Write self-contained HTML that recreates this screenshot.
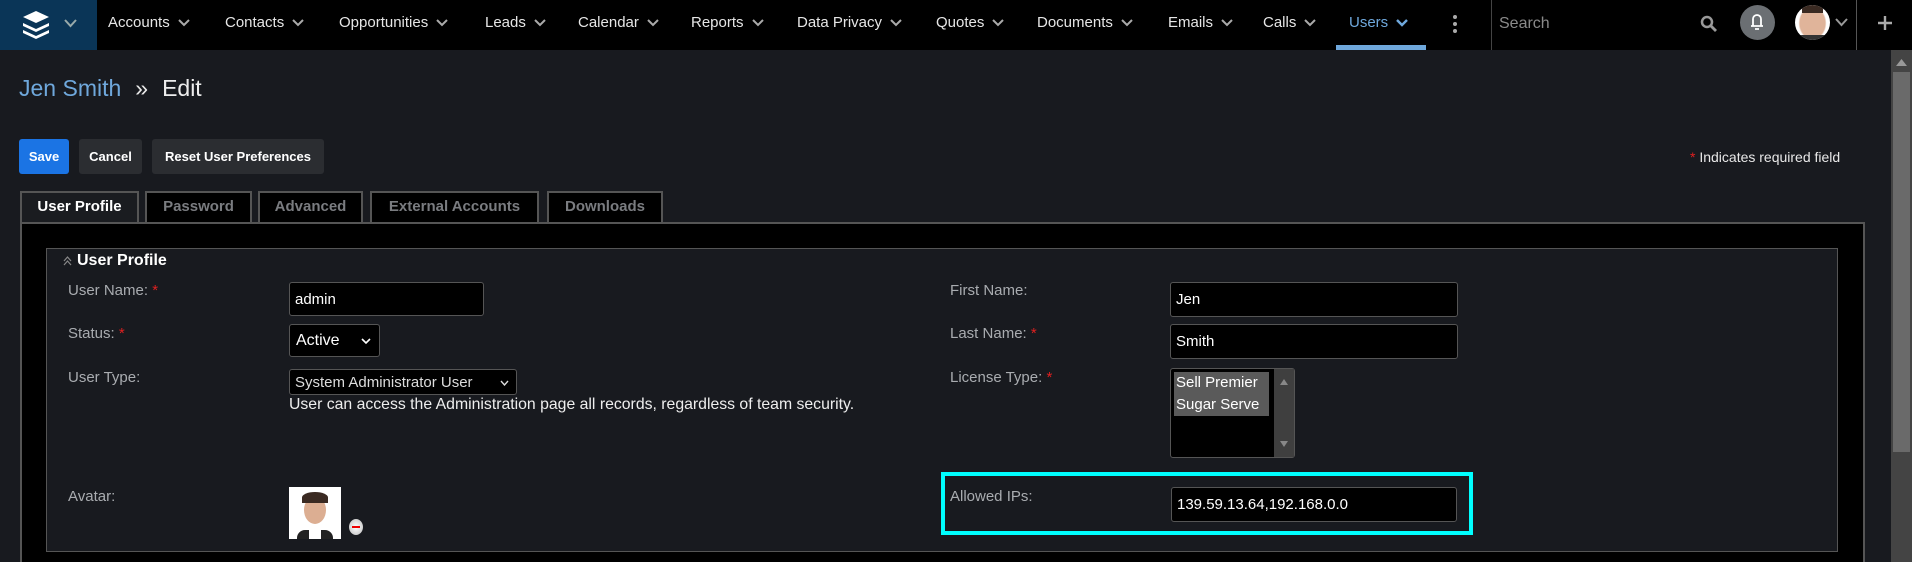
<!DOCTYPE html>
<html><head><meta charset="utf-8"><style>
*{margin:0;padding:0;box-sizing:border-box}
html{width:1912px;height:562px;overflow:hidden}
body{width:1912px;height:562px;overflow:hidden;background:#181a1f;font-family:"Liberation Sans",Arial,sans-serif;color:#e8e8e8;position:relative}
.a{position:absolute;white-space:nowrap}
.nav{position:absolute;left:0;top:0;width:1912px;height:50px;background:#000}
.ni{position:absolute;top:14px;font-size:15px;color:#e6e6e6}
.ni svg{margin-left:8px;vertical-align:middle}
.lbl{position:absolute;font-size:15px;color:#a9acb0}
.req{color:#e02020}
.inp{position:absolute;background:#000;border:1px solid #555;border-radius:3px;font-size:15px;color:#fff;padding-left:5px;display:flex;align-items:center}
.btn{position:absolute;top:139px;height:35px;border-radius:3px;font-size:13px;font-weight:bold;color:#fff;display:flex;align-items:center;justify-content:center;background:#2b2d31}
.tab{position:absolute;top:191px;height:32px;border:2px solid #555;border-bottom:none;background:#000;color:#7a7c80;font-size:15px;font-weight:bold;display:flex;align-items:center;justify-content:center;padding-bottom:3px}
</style></head><body>
<div class="nav">
 <div class="a" style="left:0;top:0;width:97px;height:50px;background:#0a3557"></div>
 <svg class="a" style="left:21px;top:10px" width="30" height="29" viewBox="0 0 30 29"><path d="M15 1L28 7L15 13L2 7Z" fill="#fff"/><path d="M2 13L15 19L28 13L28 16L15 22L2 16Z" fill="#fff"/><path d="M2 20L15 26L28 20L28 23L15 29L2 23Z" fill="#fff"/></svg>
 <svg class="a" style="left:64px;top:19px" width="13" height="9"><path d="M1 1L6.5 7L12 1" stroke="#9aa" stroke-width="2" fill="none"/></svg>
 <div class="ni" style="left:108px">Accounts<svg width="12" height="8"><path d="M1 1L6 6L11 1" stroke="#aaa" stroke-width="2" fill="none"/></svg></div>
 <div class="ni" style="left:225px">Contacts<svg width="12" height="8"><path d="M1 1L6 6L11 1" stroke="#aaa" stroke-width="2" fill="none"/></svg></div>
 <div class="ni" style="left:339px">Opportunities<svg width="12" height="8"><path d="M1 1L6 6L11 1" stroke="#aaa" stroke-width="2" fill="none"/></svg></div>
 <div class="ni" style="left:485px">Leads<svg width="12" height="8"><path d="M1 1L6 6L11 1" stroke="#aaa" stroke-width="2" fill="none"/></svg></div>
 <div class="ni" style="left:578px">Calendar<svg width="12" height="8"><path d="M1 1L6 6L11 1" stroke="#aaa" stroke-width="2" fill="none"/></svg></div>
 <div class="ni" style="left:691px">Reports<svg width="12" height="8"><path d="M1 1L6 6L11 1" stroke="#aaa" stroke-width="2" fill="none"/></svg></div>
 <div class="ni" style="left:797px">Data Privacy<svg width="12" height="8"><path d="M1 1L6 6L11 1" stroke="#aaa" stroke-width="2" fill="none"/></svg></div>
 <div class="ni" style="left:936px">Quotes<svg width="12" height="8"><path d="M1 1L6 6L11 1" stroke="#aaa" stroke-width="2" fill="none"/></svg></div>
 <div class="ni" style="left:1037px">Documents<svg width="12" height="8"><path d="M1 1L6 6L11 1" stroke="#aaa" stroke-width="2" fill="none"/></svg></div>
 <div class="ni" style="left:1168px">Emails<svg width="12" height="8"><path d="M1 1L6 6L11 1" stroke="#aaa" stroke-width="2" fill="none"/></svg></div>
 <div class="ni" style="left:1263px">Calls<svg width="12" height="8"><path d="M1 1L6 6L11 1" stroke="#aaa" stroke-width="2" fill="none"/></svg></div>
 <div class="ni" style="left:1349px;color:#6fa8dc">Users<svg width="12" height="8"><path d="M1 1L6 6L11 1" stroke="#6fa8dc" stroke-width="2.4" fill="none"/></svg></div>
 <div class="a" style="left:1336px;top:45px;width:90px;height:5px;background:#6fa8dc"></div>
 <svg class="a" style="left:1453px;top:15px" width="4" height="18"><circle cx="2" cy="2" r="2" fill="#aaa"/><circle cx="2" cy="9" r="2" fill="#aaa"/><circle cx="2" cy="16" r="2" fill="#aaa"/></svg>
 <div class="a" style="left:1491px;top:0;width:1px;height:50px;background:#444"></div>
 <div class="a" style="left:1499px;top:15px;font-size:16px;color:#8a8a8a">Search</div>
 <svg class="a" style="left:1700px;top:15px" width="18" height="18"><circle cx="7" cy="7" r="5" stroke="#999" stroke-width="2.5" fill="none"/><path d="M11 11L16 16" stroke="#999" stroke-width="2.8"/></svg>
 <div class="a" style="left:1740px;top:5px;width:35px;height:35px;border-radius:50%;background:#6b6f73"></div>
 <svg class="a" style="left:1750px;top:13px" width="14" height="18"><path d="M3 13V6a4 4 0 0 1 8 0v7H3zM1 13h12M5 16h4" stroke="#fff" stroke-width="1.8" fill="none"/></svg>
 <div class="a" style="left:1795px;top:5px;width:35px;height:35px;border-radius:50%;background:radial-gradient(ellipse 40% 48% at 50% 52%,#e0b49a 0 90%,#fff 100%);overflow:hidden"><div style="position:absolute;left:7px;top:0;width:21px;height:8px;background:#3a2a22;border-radius:50% 50% 0 0"></div><div style="position:absolute;left:5px;top:30px;width:25px;height:6px;background:#333"></div></div>
 <svg class="a" style="left:1835px;top:18px" width="13" height="9"><path d="M1 1L6.5 7L12 1" stroke="#999" stroke-width="2" fill="none"/></svg>
 <div class="a" style="left:1856px;top:0;width:1px;height:50px;background:#555"></div>
 <svg class="a" style="left:1877px;top:15px" width="16" height="16"><path d="M8 1V15M1 8H15" stroke="#aaa" stroke-width="2.4"/></svg>
</div>
<div class="a" style="left:1891px;top:50px;width:21px;height:512px;background:#444"></div>
<div class="a" style="left:1893px;top:72px;width:17px;height:380px;background:#6a6a6a"></div>
<svg class="a" style="left:1896px;top:59px" width="11" height="7"><path d="M0 7L5.5 0L11 7Z" fill="#999"/></svg>

<div class="a" style="left:19px;top:75px;font-size:23px"><span style="color:#6fa8dc">Jen Smith</span><span style="color:#e8e8e8;margin-left:14px">»</span><span style="color:#ededed;margin-left:14px">Edit</span></div>
<div class="btn" style="left:19px;width:50px;background:#1b74e4">Save</div>
<div class="btn" style="left:79px;width:63px">Cancel</div>
<div class="btn" style="left:152px;width:172px">Reset User Preferences</div>
<div class="a" style="left:1690px;top:149px;font-size:14px;color:#e8e8e8"><span class="req">*</span> Indicates required field</div>

<div class="tab" style="left:20px;width:119px;background:#1a1c20;color:#fff">User Profile</div>
<div class="tab" style="left:145px;width:107px">Password</div>
<div class="tab" style="left:258px;width:105px">Advanced</div>
<div class="tab" style="left:370px;width:169px">External Accounts</div>
<div class="tab" style="left:547px;width:116px">Downloads</div>

<div class="a" style="left:20px;top:222px;width:1845px;height:345px;background:#000;border:2px solid #555"></div>
<div class="a" style="left:46px;top:248px;width:1792px;height:304px;background:#181a1f;border:1px solid #555"></div>
<svg class="a" style="left:63px;top:256px" width="9" height="10"><path d="M1 5L4.5 1L8 5M1 9L4.5 5L8 9" stroke="#888" stroke-width="1.2" fill="none"/></svg>
<div class="a" style="left:77px;top:252px;font-size:16px;font-weight:bold;color:#fff">User Profile</div>

<div class="lbl" style="left:68px;top:282px">User Name: <span class="req">*</span></div>
<div class="inp" style="left:289px;top:282px;width:195px;height:34px">admin</div>
<div class="lbl" style="left:68px;top:325px">Status: <span class="req">*</span></div>
<div class="inp" style="left:289px;top:324px;width:91px;height:33px;font-size:16px;padding-left:6px">Active<svg style="position:absolute;right:8px;top:13px" width="10" height="7"><path d="M1 1L5 5L9 1" stroke="#fff" stroke-width="1.6" fill="none"/></svg></div>
<div class="lbl" style="left:68px;top:369px">User Type:</div>
<div class="inp" style="left:289px;top:369px;width:228px;height:26px;color:#ddd">System Administrator User<svg style="position:absolute;right:7px;top:10px" width="9" height="6"><path d="M1 1L4.5 5L8 1" stroke="#ddd" stroke-width="1.4" fill="none"/></svg></div>
<div class="a" style="left:289px;top:396px;font-size:15.8px;color:#eee">User can access the Administration page all records, regardless of team security.</div>
<div class="lbl" style="left:68px;top:488px">Avatar:</div>
<div class="a" style="left:289px;top:487px;width:52px;height:52px;background:#fff;overflow:hidden"><div style="position:absolute;left:15px;top:9px;width:22px;height:28px;border-radius:50%;background:#dcae92"></div><div style="position:absolute;left:13px;top:5px;width:26px;height:11px;border-radius:50% 50% 0 0;background:#3a2a22"></div><div style="position:absolute;left:8px;top:43px;width:36px;height:12px;background:#222;border-radius:8px 8px 0 0"></div><div style="position:absolute;left:20px;top:40px;width:12px;height:12px;background:#fff"></div></div>
<div class="a" style="left:349px;top:519px;width:14px;height:16px;border-radius:50%;background:radial-gradient(#fff,#bbb)"><div style="position:absolute;left:3px;top:7px;width:8px;height:2px;background:#e00"></div></div>

<div class="lbl" style="left:950px;top:282px">First Name:</div>
<div class="inp" style="left:1170px;top:282px;width:288px;height:35px">Jen</div>
<div class="lbl" style="left:950px;top:325px">Last Name: <span class="req">*</span></div>
<div class="inp" style="left:1170px;top:324px;width:288px;height:35px">Smith</div>
<div class="lbl" style="left:950px;top:369px">License Type: <span class="req">*</span></div>
<div class="a" style="left:1170px;top:368px;width:125px;height:90px;background:#000;border:1px solid #555;border-radius:3px">
 <div style="position:absolute;left:3px;top:3px;width:95px;height:44px;background:#5a5a5a;font-size:15px;color:#fff;line-height:22px;padding-left:2px">Sell Premier<br>Sugar Serve</div>
 <div style="position:absolute;right:0;top:0;width:20px;height:88px;background:#3f3f3f"></div>
 <svg style="position:absolute;right:6px;top:10px" width="8" height="6"><path d="M0 6L4 0L8 6Z" fill="#888"/></svg>
 <svg style="position:absolute;right:6px;bottom:10px" width="8" height="6"><path d="M0 0L4 6L8 0Z" fill="#888"/></svg>
</div>
<div class="a" style="left:941px;top:472px;width:532px;height:63px;border:4px solid #0ff"></div>
<div class="lbl" style="left:950px;top:488px">Allowed IPs:</div>
<div class="inp" style="left:1171px;top:487px;width:286px;height:35px">139.59.13.64,192.168.0.0</div>
</body></html>
